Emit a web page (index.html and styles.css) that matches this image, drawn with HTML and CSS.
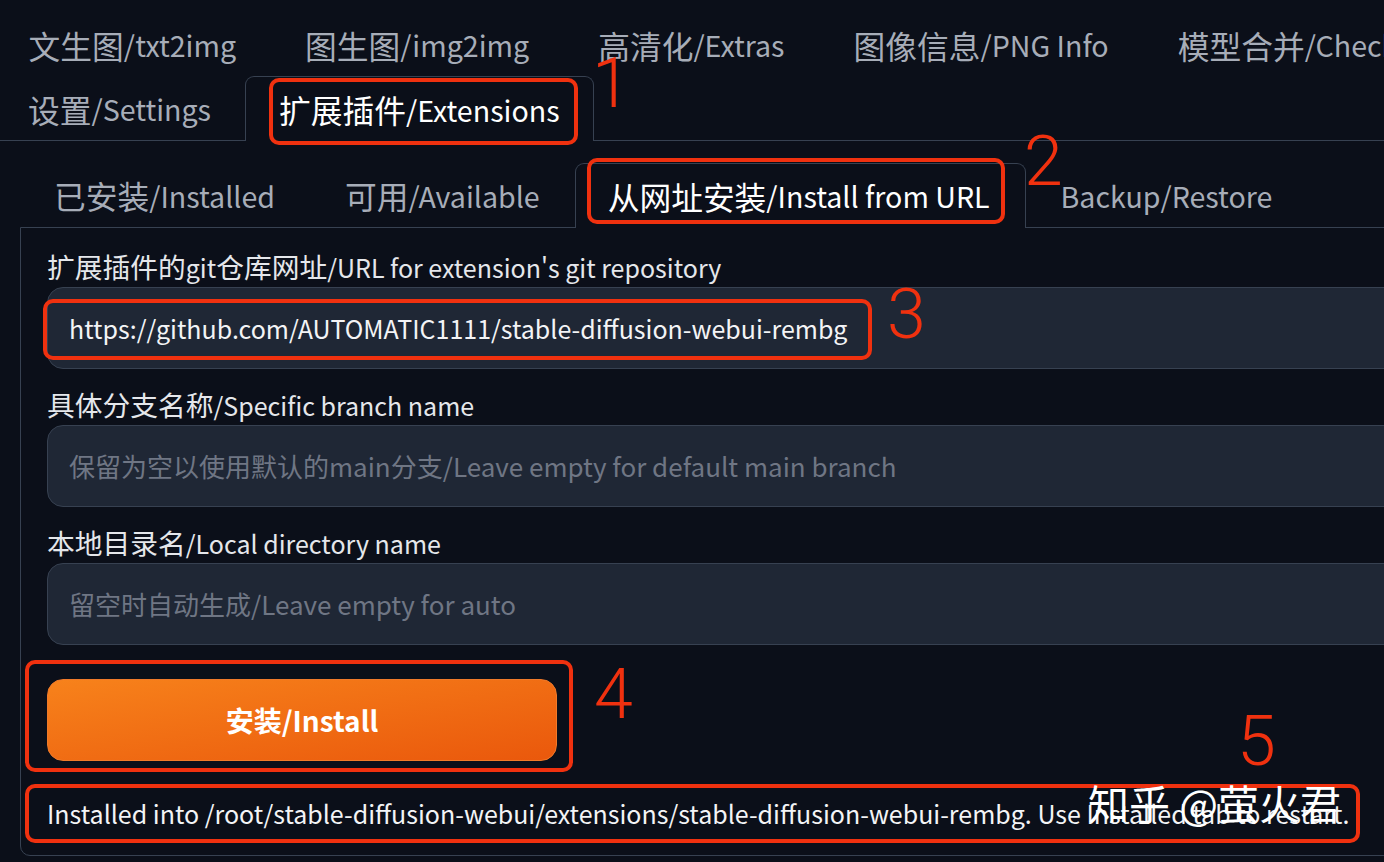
FILE: index.html
```html
<!DOCTYPE html>
<html lang="zh-CN">
<head>
<meta charset="utf-8">
<title>Extensions</title>
<link rel="stylesheet" href="styles.css">
</head>
<body>
<div class="page">
  <div class="tabs-main">
    <div class="tab-row">
      <div class="tab"><span class="zh">文生图</span>/txt2img</div>
      <div class="tab"><span class="zh">图生图</span>/img2img</div>
      <div class="tab"><span class="zh">高清化</span>/Extras</div>
      <div class="tab"><span class="zh">图像信息</span>/PNG Info</div>
      <div class="tab"><span class="zh">模型合并</span>/Checkpoint Merger</div>
    </div>
    <div class="tab-row row2">
      <div class="tab"><span class="zh">设置</span>/Settings</div>
      <div class="tab sel"><span class="zh">扩展插件</span>/Extensions</div>
    </div>
  </div>

  <div class="sub-row">
    <div class="tab"><span class="zh">已安装</span>/Installed</div>
    <div class="tab"><span class="zh">可用</span>/Available</div>
    <div class="tab sel"><span class="zh">从网址安装</span>/Install from URL</div>
    <div class="tab">Backup/Restore</div>
  </div>

  <div class="panel">
    <label class="label"><span class="zh">扩展插件的</span>git<span class="zh">仓库网址</span>/URL for extension's git repository</label>
    <input class="field" type="text" value="https://github.com/AUTOMATIC1111/stable-diffusion-webui-rembg">
    <label class="label"><span class="zh">具体分支名称</span>/Specific branch name</label>
    <input class="field" type="text" placeholder="保留为空以使用默认的main分支/Leave empty for default main branch">
    <label class="label"><span class="zh">本地目录名</span>/Local directory name</label>
    <input class="field" type="text" placeholder="留空时自动生成/Leave empty for auto">
    <button class="install">安装/Install</button>
    <div class="output">Installed into /root/stable-diffusion-webui/extensions/stable-diffusion-webui-rembg. Use Installed tab to restart.</div>
  </div>
</div>

<div class="mark box1"></div><div class="num n1">1</div>
<div class="mark box2"></div><div class="num n2">2</div>
<div class="mark box3"></div><div class="num n3">3</div>
<div class="mark box4"></div><div class="num n4">4</div>
<div class="mark box5"></div><div class="num n5">5</div>
<div class="watermark">知乎 @萤火君</div>
</body>
</html>
```

FILE: styles.css
```css
html, body {
  margin: 0;
  padding: 0;
  background: #0b0f19;
  overflow: hidden;
}
body {
  width: 1384px;
  height: 862px;
  position: relative;
  font-family: "Noto Sans CJK SC", "Noto Sans", sans-serif;
  color: #e5e7eb;
}
.zh {
  font-size: 1.11em;
}
.page {
  padding-top: 12px;
}
.tab-row {
  display: flex;
  height: 64px;
  margin-left: -6px;
  white-space: nowrap;
}
.row2 {
  border-bottom: 1px solid #374151;
  width: 1600px;
}
.tab {
  box-sizing: border-box;
  height: 64px;
  padding: 0 33.5px;
  display: flex;
  align-items: center;
  font-size: 28.6px;
  color: #a7adb8;
  border: 1px solid transparent;
  border-bottom: none;
  border-radius: 9px 9px 0 0;
  flex: none;
}
.row2 .tab {
  padding: 0 33px;
}
.tab.sel {
  height: 65px;
  color: #ffffff;
  background: #0b0f19;
  border-color: #374151;
  position: relative;
  z-index: 1;
}
.sub-row {
  display: flex;
  height: 64px;
  margin-top: 22px;
  margin-left: 19px;
  white-space: nowrap;
}
.sub-row .tab {
  padding: 0 34px 1px 34px;
}
.sub-row .tab.sel {
  padding: 0 35px 1px 32px;
}
.panel {
  width: 1500px;
  margin-left: 20px;
  border: 1px solid #374151;
  border-radius: 0 0 0 10px;
  padding: 21px 0 25px 26px;
  display: flex;
  flex-direction: column;
  align-items: flex-start;
}
.label {
  font-size: 25px;
  line-height: 34px;
  color: #e5e7eb;
  margin-bottom: 3px;
}
.field {
  box-sizing: border-box;
  width: 100%;
  height: 82px;
  margin: 0 0 18px 0;
  padding: 0 21px;
  background: #1f2735;
  border: 1px solid #374151;
  border-radius: 16px;
  font-family: inherit;
  font-size: 25px;
  color: #f3f4f6;
  outline: none;
}
.field::placeholder {
  color: #6f7684;
  font-size: 26px;
}
.install {
  margin-top: 16px;
  width: 510px;
  height: 82px;
  border: 1px solid #f07a2a;
  border-radius: 16px;
  background: linear-gradient(to bottom right, #f7821b, #ea580c);
  color: #ffffff;
  font-family: inherit;
  font-size: 28px;
  font-weight: 700;
}
.output {
  margin-top: 35px;
  font-size: 25px;
  line-height: 34px;
  color: #f3f4f6;
  white-space: nowrap;
}

/* annotations */
.mark {
  position: absolute;
  border: 4px solid #f0310f;
  border-radius: 10px;
  z-index: 5;
}
.box1 { left: 269px; top: 78px; width: 301px; height: 59px; }
.box2 { left: 587px; top: 158px; width: 410px; height: 58px; }
.box3 { left: 43px; top: 299px; width: 821px; height: 53px; }
.box4 { left: 25px; top: 660px; width: 540px; height: 104px; }
.box5 { left: 25px; top: 784px; width: 1327px; height: 51px; }
.num {
  position: absolute;
  font-family: Roboto, "Liberation Sans", sans-serif;
  font-weight: 300;
  font-size: 70px;
  line-height: 1;
  color: #f0310f;
  z-index: 5;
}
.n1 { left: 592px; top: 48px; }
.n2 { left: 1024px; top: 126px; }
.n3 { left: 887px; top: 279px; }
.n4 { left: 594px; top: 659px; }
.n5 { left: 1237px; top: 706px; }
.watermark {
  position: absolute;
  left: 1088px;
  top: 778px;
  font-family: "Noto Sans CJK SC", sans-serif;
  font-size: 41px;
  line-height: 1.2;
  color: #ffffff;
  z-index: 6;
  white-space: nowrap;
}
```
